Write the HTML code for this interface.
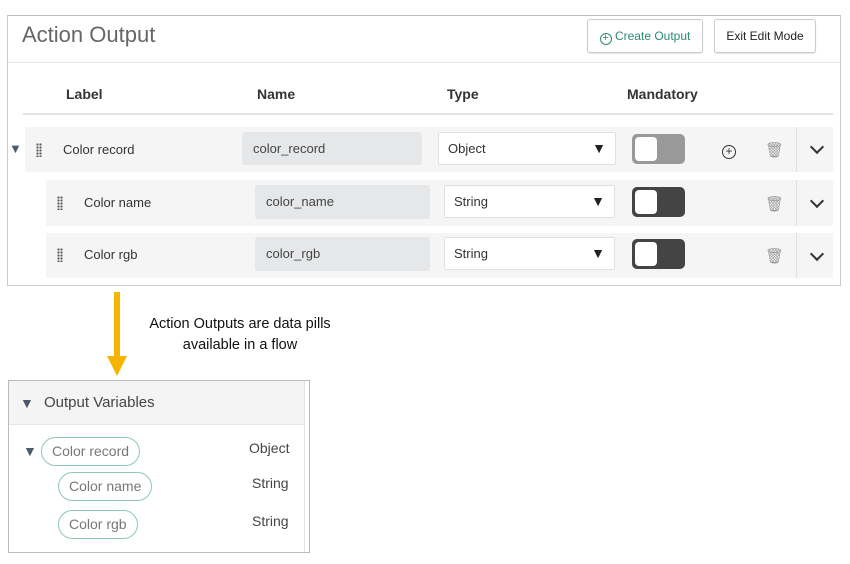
<!DOCTYPE html>
<html><head><style>
*{box-sizing:border-box;margin:0;padding:0}
body{width:850px;height:564px;background:#fff;font-family:"Liberation Sans",sans-serif;position:relative;overflow:hidden;color:#333}
.a{position:absolute}
.panel{left:7px;top:15px;width:834px;height:271px;border:1px solid #ccc;border-top-color:#bbb}
.btn{border:1px solid #ccc;border-radius:3px;background:#fff;font-size:12px;height:34px;line-height:32px;text-align:center;box-shadow:0 1px 1px rgba(0,0,0,.1)}
.row{background:#f5f5f5}
.inp{background:#e6e7e8;border-radius:3px;font-size:13px;line-height:33px;padding-left:11px;color:#444}
.sel{background:#fff;border:1px solid #e0e0e0;border-radius:2px;font-size:13px;line-height:31px;padding-left:9px;color:#333}
.sel:after{content:"▼";position:absolute;right:9px;top:0;font-size:14px;color:#222}
.tog{width:53px;height:30px;border-radius:5px}
.tog:before{content:"";position:absolute;left:3px;top:3px;width:22px;height:24px;background:#fff;border-radius:4px}
.grip{width:6px;height:14px;background-image:radial-gradient(circle,#555 1px,transparent 1.2px);background-size:3px 3px}
.lbl{font-size:13px;color:#333}
.hd{font-size:14px;font-weight:bold;color:#333}
.chev{width:10px;height:10px;border-right:2px solid #333;border-bottom:2px solid #333;transform:rotate(45deg)}
.pill{border:1.5px solid #8dc8bd;border-radius:15px;height:29px;line-height:26px;font-size:14px;color:#777;padding:0 10px}
.ty{font-size:14px;color:#444}
.tri{font-size:14px;color:#4a5a6a}
</style></head><body>
<div class="a panel"></div>
<div class="a" style="left:22px;top:22px;font-size:22px;color:#666">Action Output</div>
<div class="a btn" style="left:587px;top:19px;width:116px;color:#2a8a70"><span style="display:inline-block;width:12px;height:12px;border:1px solid #2a8a70;border-radius:50%;line-height:9px;font-size:11px;vertical-align:-1px">+</span> Create Output</div>
<div class="a btn" style="left:714px;top:19px;width:102px;color:#222">Exit Edit Mode</div>
<div class="a" style="left:8px;top:62px;width:832px;height:1px;background:#e5e5e5"></div>
<div class="a hd" style="left:66px;top:86px">Label</div>
<div class="a hd" style="left:257px;top:86px">Name</div>
<div class="a hd" style="left:447px;top:86px">Type</div>
<div class="a hd" style="left:627px;top:86px">Mandatory</div>
<div class="a" style="left:23px;top:113px;width:810px;height:2px;background:#e3e3e3"></div>

<div class="a row" style="left:25px;top:127px;width:808px;height:45px"></div>
<div class="a tri" style="left:9px;top:141px;font-size:13px">▼</div>
<div class="a grip" style="left:36px;top:143px"></div>
<div class="a lbl" style="left:63px;top:142px">Color record</div>
<div class="a inp" style="left:242px;top:132px;width:180px;height:33px">color_record</div>
<div class="a sel" style="left:438px;top:132px;width:178px;height:33px">Object</div>
<div class="a tog" style="left:632px;top:134px;background:#999"></div>
<div class="a" style="left:722px;top:145px;width:14px;height:14px;border:1.5px solid #333;border-radius:50%;font-size:12px;line-height:10px;text-align:center">+</div>
<div class="a" style="left:765px;top:141px;font-size:15px;color:#999">🗑</div>
<div class="a" style="left:796px;top:127px;width:1px;height:45px;background:#e0e0e0"></div>
<div class="a chev" style="left:812px;top:142px"></div>

<div class="a row" style="left:46px;top:180px;width:787px;height:46px"></div>
<div class="a grip" style="left:57px;top:196px"></div>
<div class="a lbl" style="left:84px;top:195px">Color name</div>
<div class="a inp" style="left:255px;top:185px;width:175px;height:34px">color_name</div>
<div class="a sel" style="left:444px;top:185px;width:171px;height:33px">String</div>
<div class="a tog" style="left:632px;top:187px;background:#444"></div>
<div class="a" style="left:765px;top:195px;font-size:15px;color:#999">🗑</div>
<div class="a" style="left:796px;top:180px;width:1px;height:46px;background:#e0e0e0"></div>
<div class="a chev" style="left:812px;top:196px"></div>

<div class="a row" style="left:46px;top:233px;width:787px;height:45px"></div>
<div class="a grip" style="left:57px;top:248px"></div>
<div class="a lbl" style="left:84px;top:247px">Color rgb</div>
<div class="a inp" style="left:255px;top:237px;width:175px;height:34px">color_rgb</div>
<div class="a sel" style="left:444px;top:237px;width:171px;height:33px">String</div>
<div class="a tog" style="left:632px;top:239px;background:#444"></div>
<div class="a" style="left:765px;top:247px;font-size:15px;color:#999">🗑</div>
<div class="a" style="left:796px;top:233px;width:1px;height:45px;background:#e0e0e0"></div>
<div class="a chev" style="left:812px;top:249px"></div>

<div class="a" style="left:114px;top:292px;width:6px;height:66px;background:#f5b400"></div>
<div class="a" style="left:107px;top:356px;width:0;height:0;border-left:10px solid transparent;border-right:10px solid transparent;border-top:20px solid #f5b400"></div>
<div class="a" style="left:120px;top:314px;width:240px;text-align:center;font-size:14.5px;line-height:21px;color:#111">Action Outputs are data pills<br>available in a flow</div>

<div class="a" style="left:8px;top:380px;width:302px;height:173px;border:1px solid #bbb"></div>
<div class="a" style="left:9px;top:381px;width:296px;height:44px;background:#f4f4f4;border-bottom:1px solid #e6e6e6"></div>
<div class="a" style="left:304px;top:381px;width:1px;height:171px;background:#e3e3e3"></div>
<div class="a tri" style="left:20px;top:395px">▼</div>
<div class="a" style="left:44px;top:394px;font-size:15px;color:#444">Output Variables</div>
<div class="a tri" style="left:23px;top:443px">▼</div>
<div class="a pill" style="left:41px;top:437px">Color record</div>
<div class="a ty" style="left:249px;top:440px">Object</div>
<div class="a pill" style="left:58px;top:472px">Color name</div>
<div class="a ty" style="left:252px;top:475px">String</div>
<div class="a pill" style="left:58px;top:510px">Color rgb</div>
<div class="a ty" style="left:252px;top:513px">String</div>
</body></html>
